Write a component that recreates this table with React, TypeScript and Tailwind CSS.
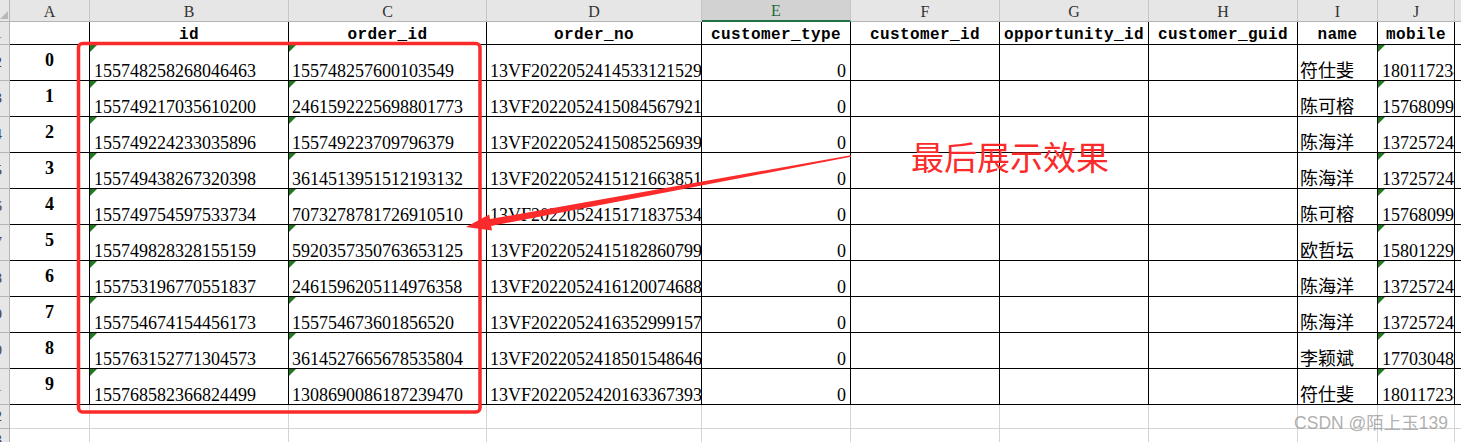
import * as React from "react";

type Row = {
  id: string;
  orderId: string;
  orderNo: string;
  name: string;
  mobile: string;
};

const rows: Row[] = [
  { id: "155748258268046463", orderId: "155748257600103549", orderNo: "13VF2022052414533121529384", name: "符仕斐", mobile: "18011723456" },
  { id: "155749217035610200", orderId: "2461592225698801773", orderNo: "13VF2022052415084567921712", name: "陈可榕", mobile: "15768099123" },
  { id: "155749224233035896", orderId: "155749223709796379", orderNo: "13VF2022052415085256939421", name: "陈海洋", mobile: "13725724321" },
  { id: "155749438267320398", orderId: "3614513951512193132", orderNo: "13VF2022052415121663851233", name: "陈海洋", mobile: "13725724321" },
  { id: "155749754597533734", orderId: "7073278781726910510", orderNo: "13VF2022052415171837534312", name: "陈可榕", mobile: "15768099123" },
  { id: "155749828328155159", orderId: "5920357350763653125", orderNo: "13VF2022052415182860799645", name: "欧哲坛", mobile: "15801229123" },
  { id: "155753196770551837", orderId: "2461596205114976358", orderNo: "13VF2022052416120074688123", name: "陈海洋", mobile: "13725724321" },
  { id: "155754674154456173", orderId: "155754673601856520", orderNo: "13VF2022052416352999157312", name: "陈海洋", mobile: "13725724321" },
  { id: "155763152771304573", orderId: "3614527665678535804", orderNo: "13VF2022052418501548646123", name: "李颖斌", mobile: "17703048234" },
  { id: "155768582366824499", orderId: "1308690086187239470", orderNo: "13VF2022052420163367393412", name: "符仕斐", mobile: "18011723456" },
];

const letters = ["A", "B", "C", "D", "E", "F", "G", "H", "I", "J", "K"];
const widths = [
  "w-[80px]",
  "w-[199px]",
  "w-[198px]",
  "w-[215px]",
  "w-[149px]",
  "w-[149px]",
  "w-[149px]",
  "w-[149px]",
  "w-[80px]",
  "w-[77px]",
  "w-[120px]",
];
const heads = ["", "id", "order_id", "order_no", "customer_type", "customer_id", "opportunity_id", "customer_guid", "name", "mobile", "create"];

const serif = "font-['Liberation_Serif','Noto_Sans_CJK_SC',serif]";
const mono = "font-['Liberation_Mono',monospace]";

function Flag() {
  return <div className="absolute left-0 top-0 size-[7px] bg-[#1f7a1f] [clip-path:polygon(0_0,100%_0,0_100%)]" />;
}

function RowHead({ n, h }: { n: number; h: string }) {
  return (
    <div className={`flex ${h} w-[10px] shrink-0 items-center justify-end overflow-hidden border-r border-b border-[#b4b4b4] bg-[#e6e6e6] pr-[7px] text-[15px] text-[#444] ${serif}`}>
      <span className="whitespace-nowrap">{n}</span>
    </div>
  );
}

const cell = "border-r border-b border-black pb-0 text-[18px] leading-[18px]";

export default function App() {
  return (
    <div className="relative h-[442px] w-[1461px] overflow-hidden bg-white text-black">
      {/* column letters */}
      <div className="flex h-[22px]">
        <div className="relative w-[10px] shrink-0 border-r border-b border-[#b4b4b4] bg-[#e6e6e6]">
          <div className="absolute bottom-[2px] right-[1px] size-[8px] bg-[#b8b8b8] [clip-path:polygon(100%_0,100%_100%,0_100%)]" />
        </div>
        {letters.map((l, i) => (
          <div
            key={l}
            className={`flex shrink-0 items-center justify-center border-r border-[#c6c6c6] pt-[2px] text-[16px] ${serif} ${widths[i]} ${
              l === "E" ? "border-b-2 border-b-[#217346] bg-[#d2d2d2] text-[#1e6b3c]" : "border-b border-b-[#b4b4b4] bg-[#e6e6e6] text-[#333]"
            }`}
          >
            {l}
          </div>
        ))}
      </div>

      {/* header row */}
      <div className="flex h-[23px]">
        <RowHead n={1} h="h-[23px]" />
        {heads.map((t, i) => (
          <div
            key={i}
            className={`flex shrink-0 items-end justify-center overflow-hidden whitespace-nowrap border-r border-b border-black pb-0 text-[16px] leading-[18px] font-bold tracking-[0.4px] ${mono} ${widths[i]}`}
          >
            {t}
          </div>
        ))}
      </div>

      {/* data rows */}
      {rows.map((r, i) => (
        <div key={i} className="flex h-[36px]">
          <RowHead n={i + 2} h="h-[36px]" />
          <div className={`flex shrink-0 justify-center border-r border-b border-black pt-[5px] text-[18px] leading-[20px] font-bold ${serif} ${widths[0]}`}>
            {i}
          </div>
          <div className={`relative flex shrink-0 items-end overflow-hidden whitespace-nowrap pl-[4px] ${cell} ${serif} ${widths[1]}`}>
            <Flag />
            {r.id}
          </div>
          <div className={`relative flex shrink-0 items-end overflow-hidden whitespace-nowrap pl-[3px] ${cell} ${serif} ${widths[2]}`}>
            <Flag />
            {r.orderId}
          </div>
          <div className={`flex shrink-0 items-end overflow-hidden whitespace-nowrap pl-[3px] ${cell} ${serif} ${widths[3]}`}>
            {r.orderNo}
          </div>
          <div className={`flex shrink-0 items-end justify-end pr-[4px] ${cell} ${serif} ${widths[4]}`}>
            0
          </div>
          <div className={`shrink-0 border-r border-b border-black ${widths[5]}`} />
          <div className={`shrink-0 border-r border-b border-black ${widths[6]}`} />
          <div className={`shrink-0 border-r border-b border-black ${widths[7]}`} />
          <div className={`flex shrink-0 items-end overflow-hidden whitespace-nowrap pl-[2px] ${cell} ${serif} ${widths[8]}`}>
            {r.name}
          </div>
          <div className={`relative flex shrink-0 items-end overflow-hidden whitespace-nowrap pl-[4px] ${cell} ${serif} ${widths[9]}`}>
            <Flag />
            {r.mobile}
          </div>
          <div className={`shrink-0 border-r border-b border-black ${widths[10]}`} />
        </div>
      ))}

      {/* empty rows */}
      {[12, 13].map((n) => (
        <div key={n} className="flex h-[24px]">
          <RowHead n={n} h="h-[24px]" />
          {widths.map((w, i) => (
            <div key={i} className={`shrink-0 border-r border-b border-[#d4d4d4] ${w}`} />
          ))}
        </div>
      ))}

      {/* annotation */}
      <svg className="pointer-events-none absolute inset-0" width="1461" height="442" viewBox="0 0 1461 442">
        <rect x="78.5" y="43.5" width="401.5" height="368.5" rx="4" fill="none" stroke="#fb2b2b" strokeWidth="3.5" />
        <polygon
          points="851.1,156.8 491.2,225.9 492,230.4 466,227 489.2,214.6 490,219.1 850.9,155.2"
          fill="#fb2b2b"
        />
      </svg>
      <div className="pointer-events-none absolute left-[911px] top-[134px] whitespace-nowrap font-['Noto_Sans_CJK_SC',sans-serif] text-[33px] leading-[44px] text-[#fb2b2b]">
        最后展示效果
      </div>
      <div className="pointer-events-none absolute right-[13px] top-[411px] whitespace-nowrap font-['Liberation_Sans','Noto_Sans_CJK_SC',sans-serif] text-[17.5px] leading-[24px] text-[#9a9a9a]/80">
        CSDN @陌上玉139
      </div>
    </div>
  );
}
